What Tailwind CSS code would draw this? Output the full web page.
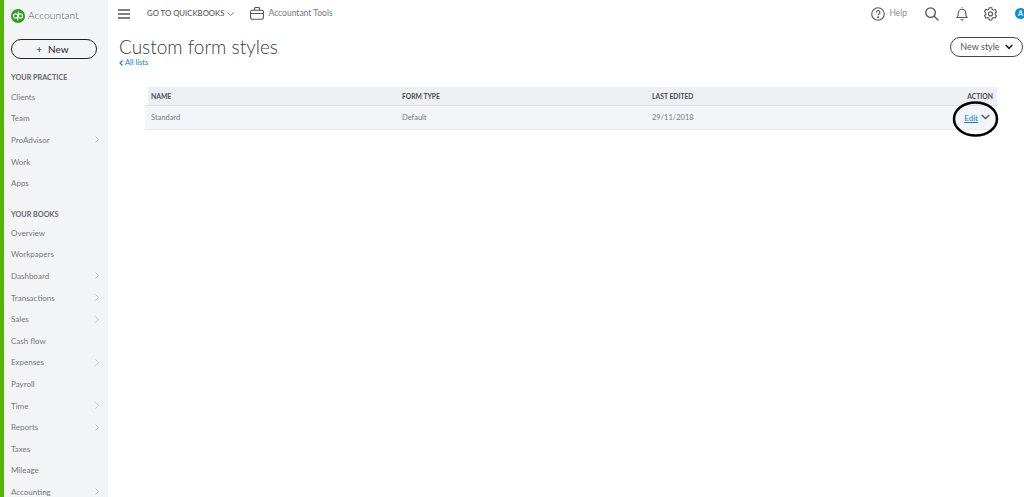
<!DOCTYPE html>
<html lang="en">
<head>
<meta charset="UTF-8">
<title>Custom form styles</title>
<script src="https://cdn.jsdelivr.net/npm/@tailwindcss/browser@4"></script>
</head>
<body class="bg-white font-['Lato','Open_Sans',sans-serif] text-[#393a3d]">
<div class="flex h-[497px] w-[1024px] overflow-hidden">
  <!-- sidebar -->
  <aside class="w-[108px] shrink-0 h-full bg-[#f3f4f6] border-l-[4px] border-[#53b700] overflow-hidden">
    <div class="flex items-center gap-[3px] pl-[7px] pt-[1px] h-[30px]">
      <svg width="14" height="14" viewBox="0 0 14 14" class="shrink-0">
        <circle cx="7" cy="7" r="7" fill="#2ca01c"/>
        <circle cx="4.600" cy="7" r="2.100" fill="none" stroke="#fff" stroke-width="1.200"/>
        <circle cx="9.400" cy="7" r="2.100" fill="none" stroke="#fff" stroke-width="1.200"/>
        <path d="M6.700 5v6.500M7.300 9V2.500" stroke="#fff" stroke-width="1.100"/>
      </svg>
      <span class="text-[10.25px] font-light text-[#55565b] leading-none">Accountant</span>
    </div>
    <div class="mt-[9px] ml-[7px] w-[86px] h-[20px] rounded-full border-[1.5px] border-[#222] flex items-center justify-center gap-[6px] pr-[3px] text-[10px] font-medium text-[#333]">
      <span>+</span><span>New</span>
    </div>
    <nav class="pl-[7px] pr-[9px] mt-[12px] text-[8px] text-[#77787d]">
      <div class="h-[15px] flex items-center font-bold text-[#66676c] text-[7.25px]">YOUR PRACTICE</div>
      <div>
        <div class="h-[21.6px] flex items-center">Clients</div>
        <div class="h-[21.6px] flex items-center">Team</div>
        <div class="h-[21.6px] flex items-center justify-between">ProAdvisor<svg width="4" height="7" viewBox="0 0 4 7" fill="none" stroke="#c4c5c9"><path d="M.5.5l3 3-3 3"/></svg></div>
        <div class="h-[21.6px] flex items-center">Work</div>
        <div class="h-[21.6px] flex items-center">Apps</div>
      </div>
      <div class="h-[15px] mt-[14px] flex items-center font-bold text-[#66676c] text-[7.25px]">YOUR BOOKS</div>
      <div class="-mt-[1px]">
        <div class="h-[21.6px] flex items-center">Overview</div>
        <div class="h-[21.6px] flex items-center">Workpapers</div>
        <div class="h-[21.6px] flex items-center justify-between">Dashboard<svg width="4" height="7" viewBox="0 0 4 7" fill="none" stroke="#c4c5c9"><path d="M.5.5l3 3-3 3"/></svg></div>
        <div class="h-[21.6px] flex items-center justify-between">Transactions<svg width="4" height="7" viewBox="0 0 4 7" fill="none" stroke="#c4c5c9"><path d="M.5.5l3 3-3 3"/></svg></div>
        <div class="h-[21.6px] flex items-center justify-between">Sales<svg width="4" height="7" viewBox="0 0 4 7" fill="none" stroke="#c4c5c9"><path d="M.5.5l3 3-3 3"/></svg></div>
        <div class="h-[21.6px] flex items-center">Cash flow</div>
        <div class="h-[21.6px] flex items-center justify-between">Expenses<svg width="4" height="7" viewBox="0 0 4 7" fill="none" stroke="#c4c5c9"><path d="M.5.5l3 3-3 3"/></svg></div>
        <div class="h-[21.6px] flex items-center">Payroll</div>
        <div class="h-[21.6px] flex items-center justify-between">Time<svg width="4" height="7" viewBox="0 0 4 7" fill="none" stroke="#c4c5c9"><path d="M.5.5l3 3-3 3"/></svg></div>
        <div class="h-[21.6px] flex items-center justify-between">Reports<svg width="4" height="7" viewBox="0 0 4 7" fill="none" stroke="#c4c5c9"><path d="M.5.5l3 3-3 3"/></svg></div>
        <div class="h-[21.6px] flex items-center">Taxes</div>
        <div class="h-[21.6px] flex items-center">Mileage</div>
        <div class="h-[21.6px] flex items-center justify-between">Accounting<svg width="4" height="7" viewBox="0 0 4 7" fill="none" stroke="#c4c5c9"><path d="M.5.5l3 3-3 3"/></svg></div>
      </div>
    </nav>
  </aside>

  <!-- main -->
  <main class="flex-1 min-w-0 relative">
    <!-- top bar -->
    <header class="h-[27px] flex items-center pl-[10px] text-[#55565b]">
      <svg width="12" height="10" viewBox="0 0 12 10" stroke="#55565b" stroke-width="1.3" class="mr-[17px]"><path d="M0 1h12M0 5h12M0 9h12"/></svg>
      <span class="text-[7.75px] font-medium">GO TO QUICKBOOKS</span>
      <svg width="7" height="4" viewBox="0 0 7 4" fill="none" stroke="#888" class="ml-[2px] mr-[16px]"><path d="M.5.5l3 3 3-3"/></svg>
      <svg width="14" height="13" viewBox="0 0 14 13" fill="none" stroke="#55565b" stroke-width="1.1" class="mr-[5px]"><rect x=".6" y="3.2" width="12.8" height="9" rx="1.5"/><path d="M4.5 3.2V1.5a1 1 0 011-1h3a1 1 0 011 1v1.7M.6 6.5h12.8"/></svg>
      <span class="text-[8.5px] text-[#77787d]">Accountant Tools</span>
      <div class="ml-auto flex items-center -mr-[2px]">
        <svg width="14" height="14" viewBox="0 0 14 14" fill="none" stroke="#55565b" stroke-width="1.1"><circle cx="7" cy="7" r="6.3"/><path d="M5.3 5.4a1.8 1.8 0 113 1.3c-.7.5-1.2.8-1.2 1.6"/><circle cx="7.1" cy="10.2" r=".4" fill="#55565b"/></svg>
        <span class="text-[8.5px] text-[#8d8e93] ml-[4px] mr-[18px]">Help</span>
        <svg width="14" height="14" viewBox="0 0 14 14" fill="none" stroke="#55565b" stroke-width="1.3" class="mr-[17px]"><circle cx="5.6" cy="5.6" r="4.8"/><path d="M9 9l4.5 4.5"/></svg>
        <svg width="12" height="14" viewBox="0 0 12 14" fill="none" stroke="#55565b" stroke-width="1.1" class="mr-[16px]"><path d="M1 10.500c1-1 1.300-2 1.300-4.500a3.700 3.700 0 017.400 0c0 2.500.3 3.500 1.300 4.500zM4.700 12.300a1.500 1.500 0 002.600 0M6 1V.3"/></svg>
        <svg width="13" height="14" viewBox="0 0 13 14" fill="none" stroke="#55565b" stroke-width="1.1" class="mr-[18px]"><path d="M5.200.7h2.600l.4 1.800 1.300.7 1.700-.6 1.300 2.300-1.300 1.200v1.500l1.300 1.200-1.300 2.300-1.700-.6-1.300.7-.4 1.800H5.200l-.4-1.800-1.300-.7-1.700.6L.5 8.600l1.300-1.200V5.900L.5 4.700l1.300-2.300 1.700.6 1.300-.7z"/><circle cx="6.500" cy="6.900" r="2"/></svg>
        <span class="w-[11px] h-[11px] shrink-0 rounded-full bg-[#0a8fe0] text-white text-[7px] font-bold flex items-center justify-center">A</span>
      </div>
    </header>

    <!-- title -->
    <div class="pl-[11px] pr-[1px] flex items-start justify-between">
      <div>
        <h1 class="text-[19px] font-light leading-[24px] mt-[8px] text-[#393a3d]">Custom form styles</h1>
        <a class="-mt-[1px] flex items-center gap-[2px] text-[7.5px] leading-[10px] text-[#0d7fd4]"><svg width="4" height="6" viewBox="0 0 4 6" fill="none" stroke="#0d7fd4" stroke-width="1.1"><path d="M3.500.5l-2.500 2.500 2.500 2.500"/></svg>All lists</a>
      </div>
      <div class="mt-[10px] w-[73px] h-[20px] rounded-full border border-[#444] flex items-center justify-center gap-[5px] text-[9px] text-[#555]">
        <span>New style</span>
        <svg width="8" height="6" viewBox="0 0 8 6" fill="none" stroke="#222" stroke-width="1.7"><path d="M.7 1l3.300 3.300L7.300 1"/></svg>
      </div>
    </div>

    <!-- table -->
    <div class="mt-[19px] ml-[37px] w-[852px] text-[7.5px]">
      <div class="ml-[3px] h-[18px] bg-[#eeeff2] grid grid-cols-[251px_250px_1fr_auto] items-center pl-[3px] pr-[4px] text-[6.75px] font-bold text-[#4a4b50]">
        <span>NAME</span><span>FORM TYPE</span><span>LAST EDITED</span><span>ACTION</span>
      </div>
      <div class="h-[25px] bg-[#f4f5f8] border-t border-t-[#dfe0e4] border-b border-b-[#e8e9ec] grid grid-cols-[251px_250px_1fr_auto] items-center pl-[6px] pr-[7px] text-[#77787d]">
        <span>Standard</span><span>Default</span><span>29/11/2018</span>
        <span class="flex items-center gap-[3px]"><a class="underline text-[#0d7fd4] text-[8px]">Edit</a><svg width="9" height="6" viewBox="0 0 9 6" fill="none" stroke="#55565b" stroke-width="1.5" class="-mt-[2px]"><path d="M.7 1l3.800 3.500L8.300 1"/></svg></span>
      </div>
    </div>

    <!-- hand drawn circle over the action cell -->
    <svg class="absolute left-[844px] top-[100px]" width="50" height="38" viewBox="0 0 50 38" fill="none" stroke="#000" stroke-width="2.5"><ellipse cx="23.500" cy="19" rx="21.500" ry="16.500"/></svg>
  </main>
</div>
</body>
</html>
